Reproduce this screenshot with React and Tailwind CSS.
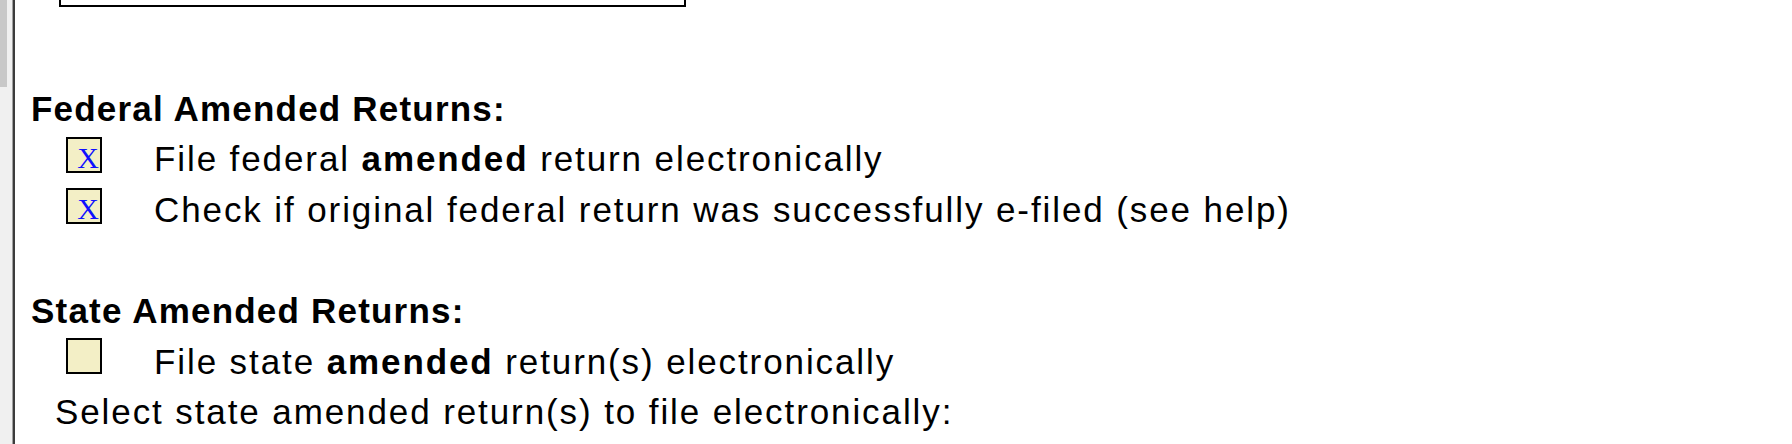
import React from "react";

const font = { fontFamily: '"Liberation Sans", Arial, sans-serif' };

function Box({ checked, mt }) {
  return (
    <div
      className={`w-[36px] h-[36px] shrink-0 border-2 border-black bg-[#f3efc6] flex justify-end items-start ${mt}`}
    >
      {checked && (
        <span
          className="text-[30px] leading-none text-[#1010ff] pt-[4px] pr-[1px]"
          style={{ fontFamily: '"Liberation Serif", "Times New Roman", serif' }}
        >
          X
        </span>
      )}
    </div>
  );
}

function Row({ checked, mt, h, children }) {
  return (
    <div className={`flex items-start ${h}`}>
      <div className="w-[51px] shrink-0" />
      <Box checked={checked} mt={mt} />
      <div className="ml-[52px] whitespace-nowrap text-[35px] leading-[52px] tracking-[1.9px] text-black">
        {children}
      </div>
    </div>
  );
}

export default function App() {
  return (
    <div className="flex w-[1792px] h-[444px] overflow-hidden bg-white" style={font}>
      <div className="w-[12px] shrink-0 bg-[#f0f0f0]">
        <div className="w-[7px] h-[87px] bg-[#c8c8c8]" />
      </div>
      <div className="w-px shrink-0 bg-[#a0a0a0]" />
      <div className="w-[2px] shrink-0 bg-[#3c3c3c]" />
      <div className="flex-1 flex flex-col bg-white">
        <div className="ml-[44px] w-[627px] h-[7px] border-2 border-t-0 border-black" />
        <div className="mt-[76px] h-[50px] pl-[16px] text-[35px] leading-[52px] font-bold tracking-[1.2px] text-black whitespace-nowrap">
          Federal Amended Returns:
        </div>
        <Row checked mt="mt-[4px]" h="h-[51px]">
          File federal <b className="font-bold">amended</b> return electronically
        </Row>
        <Row checked mt="mt-[4px]" h="h-[51px]">
          Check if original federal return was successfully e-filed (see help)
        </Row>
        <div className="h-[50px]" />
        <div className="h-[51px] pl-[16px] text-[35px] leading-[52px] font-bold tracking-[1.2px] text-black whitespace-nowrap">
          State Amended Returns:
        </div>
        <Row mt="mt-[2px]" h="h-[50px]">
          File state <b className="font-bold">amended</b> return(s) electronically
        </Row>
        <div className="pl-[40px] text-[35px] leading-[52px] tracking-[1.9px] text-black whitespace-nowrap">
          Select state amended return(s) to file electronically:
        </div>
      </div>
    </div>
  );
}
